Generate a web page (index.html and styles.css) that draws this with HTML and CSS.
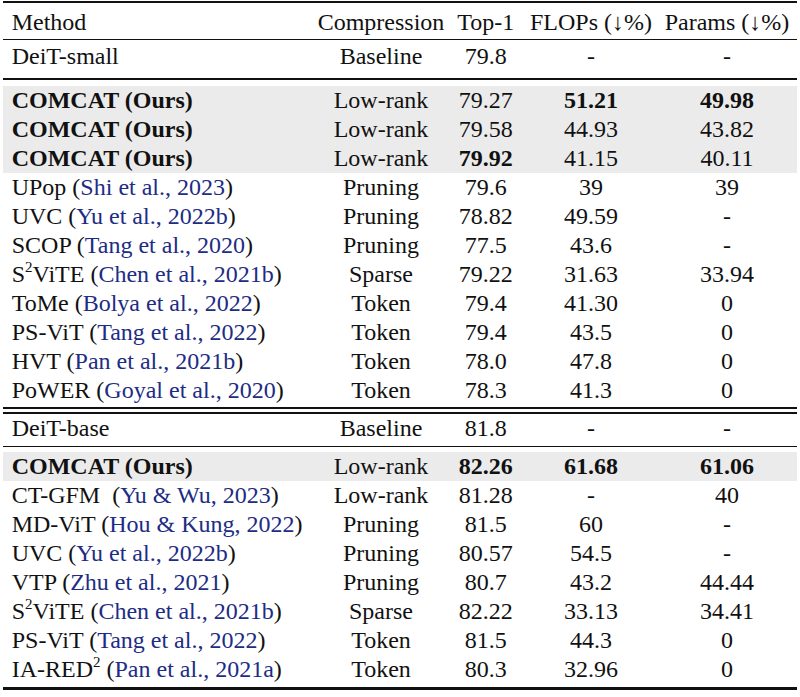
FILE: index.html
```html
<!DOCTYPE html>
<html>
<head>
<meta charset="utf-8">
<link rel="stylesheet" href="styles.css">
</head>
<body>
<div class="table">
  <div class="rule heavy top"></div>
  <div class="row head">
    <div class="m">Method</div><div class="c">Compression</div><div class="c">Top-1</div><div class="c">FLOPs (<span class="math">↓%</span>)</div><div class="c p">Params (<span class="math">↓%</span>)</div>
  </div>
  <div class="rule light r1"></div>
  <div class="row base1">
    <div class="m">DeiT-small</div><div class="c">Baseline</div><div class="c">79.8</div><div class="c">-</div><div class="c p">-</div>
  </div>
  <div class="rule light r2"></div>
  <div class="shade g1">
    <div class="row">
      <div class="m b">COMCAT (Ours)</div><div class="c">Low-rank</div><div class="c">79.27</div><div class="c b">51.21</div><div class="c p b">49.98</div>
    </div>
    <div class="row">
      <div class="m b">COMCAT (Ours)</div><div class="c">Low-rank</div><div class="c">79.58</div><div class="c">44.93</div><div class="c p">43.82</div>
    </div>
    <div class="row">
      <div class="m b">COMCAT (Ours)</div><div class="c">Low-rank</div><div class="c b">79.92</div><div class="c">41.15</div><div class="c p">40.11</div>
    </div>
  </div>
  <div class="row">
    <div class="m">UPop (<span class="cite">Shi et al., 2023</span>)</div><div class="c">Pruning</div><div class="c">79.6</div><div class="c">39</div><div class="c p">39</div>
  </div>
  <div class="row">
    <div class="m">UVC (<span class="cite">Yu et al., 2022b</span>)</div><div class="c">Pruning</div><div class="c">78.82</div><div class="c">49.59</div><div class="c p">-</div>
  </div>
  <div class="row">
    <div class="m">SCOP (<span class="cite">Tang et al., 2020</span>)</div><div class="c">Pruning</div><div class="c">77.5</div><div class="c">43.6</div><div class="c p">-</div>
  </div>
  <div class="row">
    <div class="m">S<sup>2</sup>ViTE (<span class="cite">Chen et al., 2021b</span>)</div><div class="c">Sparse</div><div class="c">79.22</div><div class="c">31.63</div><div class="c p">33.94</div>
  </div>
  <div class="row">
    <div class="m">ToMe (<span class="cite">Bolya et al., 2022</span>)</div><div class="c">Token</div><div class="c">79.4</div><div class="c">41.30</div><div class="c p">0</div>
  </div>
  <div class="row">
    <div class="m">PS-ViT (<span class="cite">Tang et al., 2022</span>)</div><div class="c">Token</div><div class="c">79.4</div><div class="c">43.5</div><div class="c p">0</div>
  </div>
  <div class="row">
    <div class="m">HVT (<span class="cite">Pan et al., 2021b</span>)</div><div class="c">Token</div><div class="c">78.0</div><div class="c">47.8</div><div class="c p">0</div>
  </div>
  <div class="row">
    <div class="m">PoWER (<span class="cite">Goyal et al., 2020</span>)</div><div class="c">Token</div><div class="c">78.3</div><div class="c">41.3</div><div class="c p">0</div>
  </div>
  <div class="rule light d1"></div>
  <div class="rule light d2"></div>
  <div class="row">
    <div class="m">DeiT-base</div><div class="c">Baseline</div><div class="c">81.8</div><div class="c">-</div><div class="c p">-</div>
  </div>
  <div class="rule light r3"></div>
  <div class="shade g2">
    <div class="row">
      <div class="m b">COMCAT (Ours)</div><div class="c">Low-rank</div><div class="c b">82.26</div><div class="c b">61.68</div><div class="c p b">61.06</div>
    </div>
  </div>
  <div class="row">
    <div class="m">CT-GFM&nbsp; (<span class="cite">Yu &amp; Wu, 2023</span>)</div><div class="c">Low-rank</div><div class="c">81.28</div><div class="c">-</div><div class="c p">40</div>
  </div>
  <div class="row">
    <div class="m">MD-ViT (<span class="cite">Hou &amp; Kung, 2022</span>)</div><div class="c">Pruning</div><div class="c">81.5</div><div class="c">60</div><div class="c p">-</div>
  </div>
  <div class="row">
    <div class="m">UVC (<span class="cite">Yu et al., 2022b</span>)</div><div class="c">Pruning</div><div class="c">80.57</div><div class="c">54.5</div><div class="c p">-</div>
  </div>
  <div class="row">
    <div class="m">VTP (<span class="cite">Zhu et al., 2021</span>)</div><div class="c">Pruning</div><div class="c">80.7</div><div class="c">43.2</div><div class="c p">44.44</div>
  </div>
  <div class="row">
    <div class="m">S<sup>2</sup>ViTE (<span class="cite">Chen et al., 2021b</span>)</div><div class="c">Sparse</div><div class="c">82.22</div><div class="c">33.13</div><div class="c p">34.41</div>
  </div>
  <div class="row">
    <div class="m">PS-ViT (<span class="cite">Tang et al., 2022</span>)</div><div class="c">Token</div><div class="c">81.5</div><div class="c">44.3</div><div class="c p">0</div>
  </div>
  <div class="row">
    <div class="m">IA-RED<sup>2</sup> (<span class="cite">Pan et al., 2021a</span>)</div><div class="c">Token</div><div class="c">80.3</div><div class="c">32.96</div><div class="c p">0</div>
  </div>
  <div class="rule heavy bottom"></div>
</div>
</body>
</html>
```

FILE: styles.css
```css
html, body {
  margin: 0;
  padding: 0;
  background: #fff;
}

body {
  font-family: "Liberation Serif", "Times New Roman", serif;
  font-size: 24px;
  color: #111;
}

.table {
  width: 794px;
  margin-left: 3px;
  display: flex;
  flex-direction: column;
}

.rule {
  background: #111;
  width: 100%;
}

.heavy { height: 2.5px; }
.light { height: 1.5px; }

.top { margin-top: 0.5px; }
.head { margin-top: 4.5px; }
.r1 { margin-top: 2px; }
.base1 { margin-top: 2.2px; }
.r2 { margin-top: 7.3px; }
.g1 { margin-top: 6.5px; }
.d1 { margin-top: 1.8px; }
.d2 { margin-top: 3.5px; }
.r3 { margin-top: 3.2px; }
.g2 { margin-top: 5px; }
.bottom { margin-top: 2.5px; height: 3px; }

.shade {
  background: #ebebeb;
}

.row {
  display: grid;
  grid-template-columns: 307.5px 141px 68.5px 142px 135px;
  height: 29px;
  line-height: 29px;
  white-space: nowrap;
}

.m {
  padding-left: 8.7px;
  text-align: left;
}

.c {
  text-align: center;
}

.p {
  padding-right: 5px;
}

.b {
  font-weight: bold;
}

.cite {
  color: #1d2c84;
}

.math {
  font-family: "Liberation Serif", "DejaVu Serif", serif;
}

sup {
  font-size: 15px;
  line-height: 0;
  vertical-align: 10px;
}
```
